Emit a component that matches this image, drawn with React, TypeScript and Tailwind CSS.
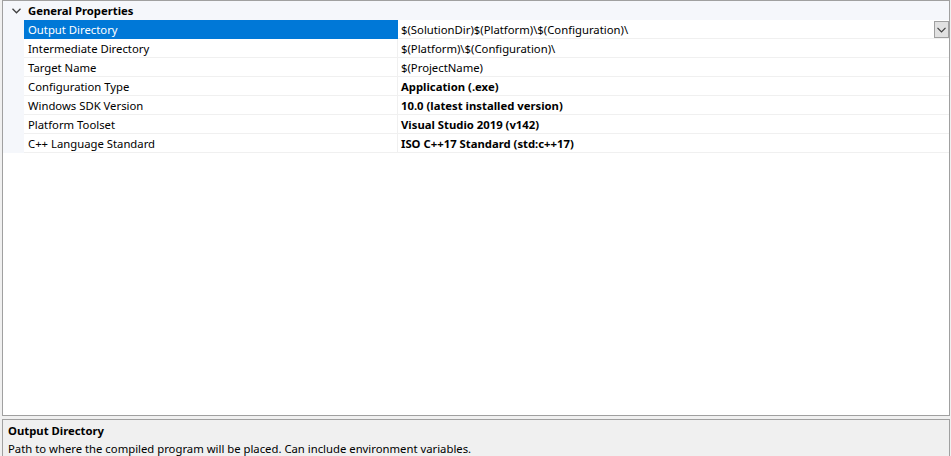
import React from "react";

const rows: { name: string; value: string; bold?: boolean }[] = [
  { name: "Output Directory", value: "$(SolutionDir)$(Platform)\\$(Configuration)\\" },
  { name: "Intermediate Directory", value: "$(Platform)\\$(Configuration)\\" },
  { name: "Target Name", value: "$(ProjectName)" },
  { name: "Configuration Type", value: "Application (.exe)", bold: true },
  { name: "Windows SDK Version", value: "10.0 (latest installed version)", bold: true },
  { name: "Platform Toolset", value: "Visual Studio 2019 (v142)", bold: true },
  { name: "C++ Language Standard", value: "ISO C++17 Standard (std:c++17)", bold: true },
];

export default function App() {
  return (
    <div
      className="w-[951px] h-[456px] bg-[#f0f0f0] overflow-hidden flex flex-col text-[11.3px] text-black"
      style={{ fontFamily: '"Noto Sans", "Segoe UI", sans-serif' }}
    >
      <div className="ml-[2px] w-[948px] h-[416px] border border-[#a0a0a0] bg-white flex flex-col shrink-0">
        <div className="h-[19px] bg-[#f5f7fb] flex items-center shrink-0">
          <div className="w-[25px] flex justify-center items-center pl-[1px]">
            <svg width="9" height="6" viewBox="0 0 9 6">
              <path d="M0.5 0.8 L4.5 4.8 L8.5 0.8" fill="none" stroke="#404040" strokeWidth="1.3" />
            </svg>
          </div>
          <span className="font-bold leading-none pt-[1px]">General Properties</span>
        </div>
        {rows.map((r, i) => (
          <div key={r.name} className="h-[19px] flex shrink-0">
            <div className="w-[21px] bg-[#f5f7fb]" />
            <div
              className={
                "w-[374px] border-b border-r flex items-center pl-[4px] pt-[1px] leading-none " +
                (i === 0 ? "bg-[#0078d7] text-white border-[#0078d7]" : "border-[#f0f0f0]")
              }
            >
              {r.name}
            </div>
            <div
              className={
                "flex-1 border-b border-[#f0f0f0] flex items-center pl-[3px] pt-[1px] leading-none relative " +
                (r.bold ? "font-bold" : "")
              }
            >
              {r.value}
              {i === 0 && (
                <div className="absolute right-0 top-[1px] w-[15px] h-[17px] bg-[#e1e1e1] border border-[#a0a0a0] flex items-center justify-center">
                  <svg width="9" height="6" viewBox="0 0 9 6">
                    <path d="M0.5 0.8 L4.5 4.8 L8.5 0.8" fill="none" stroke="#404040" strokeWidth="1.2" />
                  </svg>
                </div>
              )}
            </div>
          </div>
        ))}
      </div>
      <div className="mt-[3px] ml-[2px] w-[948px] flex-1 border border-[#a0a0a0] bg-[#f0f0f0] pl-[5px] pt-[2px]">
        <div className="font-bold leading-[18px]">Output Directory</div>
        <div className="leading-[18px]">Path to where the compiled program will be placed. Can include environment variables.</div>
      </div>
    </div>
  );
}
